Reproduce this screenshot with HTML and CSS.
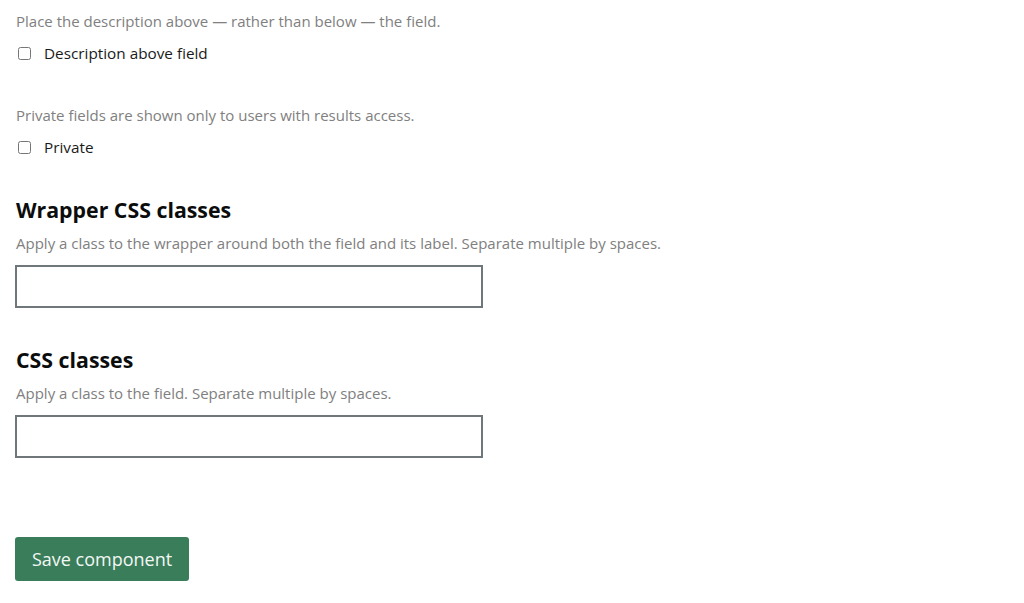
FILE: index.html
```html
<!DOCTYPE html>
<html lang="en">
<head>
<meta charset="utf-8">
<title>Component settings</title>
<link rel="stylesheet" href="styles.css">
</head>
<body>
<form class="form">
  <div class="group group-check">
    <p class="hint">Place the description above — rather than below — the field.</p>
    <label class="check"><input type="checkbox" class="check-input"><span>Description above field</span></label>
  </div>
  <div class="group group-check">
    <p class="hint">Private fields are shown only to users with results access.</p>
    <label class="check"><input type="checkbox" class="check-input"><span>Private</span></label>
  </div>
  <div class="group">
    <h2 class="heading">Wrapper CSS classes</h2>
    <p class="hint hint-tight">Apply a class to the wrapper around both the field and its label. Separate multiple by spaces.</p>
    <input type="text" class="text-input">
  </div>
  <div class="group">
    <h2 class="heading">CSS classes</h2>
    <p class="hint hint-tight">Apply a class to the field. Separate multiple by spaces.</p>
    <input type="text" class="text-input">
  </div>
  <div class="actions">
    <button type="button" class="btn">Save component</button>
  </div>
</form>
</body>
</html>
```
FILE: styles.css
```css
html, body {
  margin: 0;
  padding: 0;
  background: #fff;
}
body {
  font-family: "Open Sans", "Liberation Sans", sans-serif;
  color: #0b0c0c;
  padding: 9px 15px 0 15px;
}
.form {
  display: flex;
  flex-direction: column;
}
.group {
  display: flex;
  flex-direction: column;
}
.group-check {
  margin-bottom: 38px;
}
.group-check + .group-check {
  margin-bottom: 37px;
}
.hint {
  margin: 0 0 8px 1px;
  font-size: 15px;
  line-height: 24px;
  color: #808080;
}
.hint-tight {
  margin-bottom: 10px;
}
.check {
  display: flex;
  align-items: center;
  height: 24px;
  font-size: 15.3px;
  color: #1a1a1a;
}
.check-input {
  width: 13px;
  height: 13px;
  margin: 0 13px 0 3px;
}
.heading {
  margin: 0 0 7px 1px;
  font-size: 21.3px;
  line-height: 28px;
  font-weight: 700;
  color: #0b0c0c;
}
.text-input {
  box-sizing: border-box;
  width: 468px;
  height: 43px;
  border: 2px solid #6f777b;
  border-radius: 0;
  margin: 0 0 38px 0;
  padding: 5px;
  font: inherit;
}
.actions {
  margin-top: 41px;
}
.btn {
  box-sizing: border-box;
  height: 44px;
  width: 174px;
  background: #3a7d5a;
  color: #f3f7f4;
  border: 0;
  border-radius: 3px;
  font-family: inherit;
  font-size: 18px;
  padding: 0 12px;
  cursor: pointer;
}
```
